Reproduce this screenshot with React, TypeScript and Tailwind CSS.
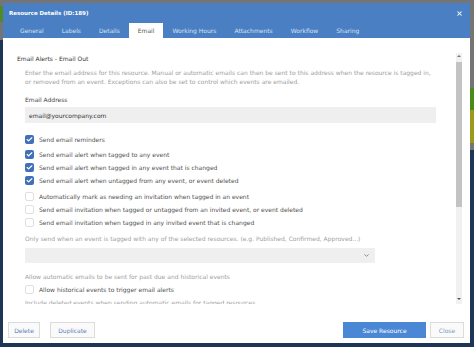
import { Check, ChevronDown, X } from 'lucide-react';

const tabs = ['General', 'Labels', 'Details', 'Email', 'Working Hours', 'Attachments', 'Workflow', 'Sharing'];

function Box({ checked, label }: { checked?: boolean; label: string }) {
  return (
    <div className="flex h-[13px] items-center gap-[5px]">
      {checked ? (
        <span className="flex h-[9px] w-[9px] items-center justify-center rounded-[2px] bg-[#3f70b8]">
          <Check size={7} strokeWidth={4} color="#fff" />
        </span>
      ) : (
        <span className="h-[9px] w-[9px] rounded-[2px] border border-[#e0e0e0] bg-white" />
      )}
      <span className="text-[6px] leading-[8px] text-[#505050]">{label}</span>
    </div>
  );
}

export default function App() {
  return (
    <div className="relative h-[347px] w-[474px] overflow-hidden bg-[#757575] font-['DejaVu_Sans',Verdana,sans-serif]">
      {/* page behind the modal */}
      <div className="absolute left-0 top-[6px] h-[16px] w-[3px] bg-[#4f8a25]" />
      <div className="absolute left-0 top-[40px] h-[307px] w-[3px] bg-[#1d3656]" />
      <div className="absolute right-0 top-[88px] h-[22px] w-[4px] bg-[#4b8a1d]" />
      <div className="absolute right-0 top-[110px] h-[33px] w-[4px] bg-[#9c9a1c]" />
      <div className="absolute right-0 top-[150px] h-[197px] w-[4px] bg-[#1d3656]" />
      <div className="absolute bottom-0 left-0 h-[4px] w-[474px] bg-[#1d3656]" />

      {/* modal */}
      <div className="relative ml-[3px] mt-[3px] flex h-[340px] w-[467px] flex-col bg-white">
        <div className="h-[35px] bg-[#4b7fc3]">
          <div className="flex h-[20px] items-center justify-between pl-[6px] pr-[7px]">
            <span className="text-[5.5px] font-bold text-white">Resource Details (ID:189)</span>
            <X size={7} strokeWidth={3.5} color="#fff" />
          </div>
          <div className="flex h-[15px] items-end pl-[8px]">
            {tabs.map((t) =>
              t === 'Email' ? (
                <div key={t} className="flex h-[15px] items-center bg-white px-[9px] text-[6px] text-[#555]">
                  {t}
                </div>
              ) : (
                <div key={t} className="flex h-[15px] items-center px-[9px] text-[6px] text-[#d3e0f3]">
                  {t}
                </div>
              ),
            )}
          </div>
        </div>

        <div className="flex h-[266px] overflow-hidden">
          <div className="flex-1 pl-[14px] pt-[17px]">
            <div className="text-[6px] leading-[8px] text-[#333]">Email Alerts - Email Out</div>
            <div className="ml-[8px] mt-[5px] text-[6px] leading-[9px] text-[#a0a0a0]">
              <div className="whitespace-nowrap">
                Enter the email address for this resource. Manual or automatic emails can then be sent to this address when the resource is tagged in,
              </div>
              <div className="whitespace-nowrap">
                or removed from an event. Exceptions can also be set to control which events are emailed.
              </div>
            </div>
            <div className="ml-[8px] mt-[10px] text-[6px] leading-[8px] text-[#444]">Email Address</div>
            <div className="ml-[8px] mt-[3px] flex h-[16px] w-[411px] items-center bg-[#efefef] pl-[4px] text-[6px] text-[#333]">
              email@yourcompany.com
            </div>
            <div className="ml-[8px] mt-[10px]">
              <Box checked label="Send email reminders" />
            </div>
            <div className="ml-[8px] mt-[2px]">
              <Box checked label="Send email alert when tagged to any event" />
              <Box checked label="Send email alert when tagged in any event that is changed" />
              <Box checked label="Send email alert when untagged from any event, or event deleted" />
            </div>
            <div className="ml-[8px] mt-[3px]">
              <Box label="Automatically mark as needing an invitation when tagged in an event" />
              <Box label="Send email invitation when tagged or untagged from an invited event, or event deleted" />
              <Box label="Send email invitation when tagged in any invited event that is changed" />
            </div>
            <div className="ml-[8px] mt-[6px] text-[6px] leading-[8px] text-[#a0a0a0]">
              Only send when an event is tagged with any of the selected resources. (e.g. Published, Confirmed, Approved...)
            </div>
            <div className="ml-[8px] mt-[5px] flex h-[15px] w-[350px] items-center justify-end bg-[#efefef] pr-[5px]">
              <ChevronDown size={7} strokeWidth={2.5} color="#666" />
            </div>
            <div className="ml-[8px] mt-[10px] text-[6px] leading-[8px] text-[#a0a0a0]">
              Allow automatic emails to be sent for past due and historical events
            </div>
            <div className="ml-[8px] mt-[2px]">
              <Box label="Allow historical events to trigger email alerts" />
            </div>
            <div className="ml-[8px] mt-[3px] text-[6px] leading-[8px] text-[#a0a0a0]">
              Include deleted events when sending automatic emails for tagged resources
            </div>
          </div>

          <div className="mr-[8px] mt-[15px] flex h-[251px] w-[6px] flex-col items-center bg-[#f1f1f1]">
            <div className="mt-[2px] h-0 w-0 border-x-[2px] border-b-[2px] border-x-transparent border-b-[#777]" />
            <div className="mt-[5px] h-[145px] w-[6px] bg-[#c3c3c3]" />
            <div className="flex-1" />
            <div className="mb-[4px] h-0 w-0 border-x-[2px] border-t-[2px] border-x-transparent border-t-[#555]" />
          </div>
        </div>

        <div className="flex flex-1 items-start justify-between pl-[5px] pr-[6px] pt-[18px]">
          <div className="flex gap-[10px]">
            <div className="flex h-[16px] w-[32px] items-center justify-center border border-[#dcdcdc] bg-[#fafafa] text-[6px] text-[#5b80b8]">
              Delete
            </div>
            <div className="flex h-[16px] w-[45px] items-center justify-center border border-[#dcdcdc] bg-[#fafafa] text-[6px] text-[#5b80b8]">
              Duplicate
            </div>
          </div>
          <div className="flex gap-[4px]">
            <div className="flex h-[16px] w-[83px] items-center justify-center bg-[#4a87d4] text-[6px] text-white">
              Save Resource
            </div>
            <div className="flex h-[16px] w-[34px] items-center justify-center border border-[#dcdcdc] bg-[#fafafa] text-[6px] text-[#7c98c2]">
              Close
            </div>
          </div>
        </div>
      </div>
    </div>
  );
}
